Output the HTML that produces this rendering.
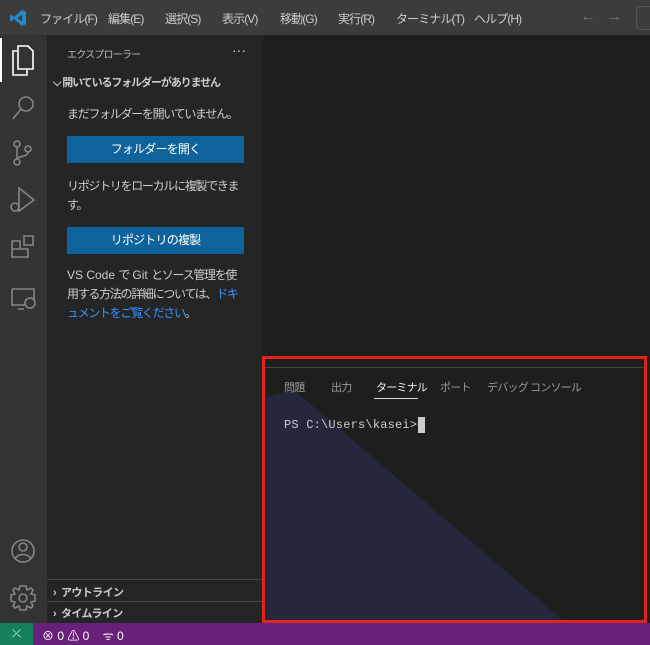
<!DOCTYPE html>
<html><head><meta charset="utf-8"><style>
*{margin:0;padding:0;box-sizing:border-box}
body{width:650px;height:645px;overflow:hidden;background:#1e1e1e;font-family:"Liberation Sans","Noto Sans CJK JP",sans-serif;color:#ccc;position:relative}
.abs{position:absolute;white-space:nowrap}
#title{left:0;top:0;width:650px;height:35px;background:#3c3c3c}
.menu{top:10px;font-size:12px;color:#ccc;letter-spacing:-0.9px}
#act{left:0;top:35px;width:47px;height:588px;background:#333}
#side{left:47px;top:35px;width:216px;height:588px;background:#252526}
.btn{left:67px;width:177px;height:27px;background:#0e639c;color:#fff;font-size:12px;text-align:center;line-height:27px;letter-spacing:-0.8px}
.t{font-size:12px;color:#ccc;line-height:19px;letter-spacing:-1.3px}
.tab{top:379px;font-size:11px;color:#999;letter-spacing:-0.8px}
#status{left:0;top:623px;width:650px;height:22px;background:#68217a;color:#fff;font-size:12px}
</style></head><body>
<div id="title" class="abs"></div>
<svg class="abs" style="left:9px;top:9px" width="18" height="18" viewBox="0 0 18 18"><path d="M13 1 L17 3 V15 L13 17 L5 10 L2 12.5 L1 11.5 V6.5 L2 5.5 L5 8 Z M13 5.5 L8.5 9 L13 12.5 Z" fill="#2489ca"/></svg>
<div class="abs menu" style="left:40px">ファイル(F)</div>
<div class="abs menu" style="left:108px">編集(E)</div>
<div class="abs menu" style="left:165px">選択(S)</div>
<div class="abs menu" style="left:222px">表示(V)</div>
<div class="abs menu" style="left:280px">移動(G)</div>
<div class="abs menu" style="left:338px">実行(R)</div>
<div class="abs menu" style="left:396px">ターミナル(T)</div>
<div class="abs menu" style="left:474px">ヘルプ(H)</div>
<div class="abs" style="left:580px;top:8px;font-size:16px;color:#777">←</div>
<div class="abs" style="left:606px;top:8px;font-size:16px;color:#777">→</div>
<div class="abs" style="left:636px;top:6px;width:20px;height:24px;border:1px solid #555;border-radius:5px"></div>

<div id="act" class="abs"></div>
<div class="abs" style="left:0;top:38px;width:2px;height:44px;background:#fff"></div>
<svg class="abs" style="left:0;top:35px" width="47" height="290" fill="none" stroke="#858585" stroke-width="1.6">
<g stroke="#fff"><path d="M17 16 H13 V40 H27 V34"/><path d="M18 11 H28 L33 16 V34 H18 Z"/></g>
<circle cx="26" cy="69" r="7"/><path d="M21 74 L13 84"/>
<circle cx="17" cy="109" r="3"/><circle cx="17" cy="127" r="3"/><circle cx="28" cy="114" r="3"/><path d="M17 112 V124 M28 117 C28 122 18 121 17 124"/>
<path d="M19 153 V176 L34 165 Z"/><circle cx="15" cy="172" r="4"/>
<path d="M12 206 H20 V214 H12 Z M12 214 V222 H20 M20 214 H28 V222 H20 M24 201 H33 V210 H24 Z"/>
<path d="M12 254 H34 V266 M12 254 V270 H26 M18 274 H24"/><circle cx="30" cy="268" r="5"/>
</svg>
<svg class="abs" style="left:0;top:535px" width="47" height="80" fill="none" stroke="#858585" stroke-width="1.6">
<circle cx="23" cy="16" r="11"/><circle cx="23" cy="12" r="4"/><path d="M15 24 C18 18 28 18 31 24"/>
<circle cx="23" cy="63" r="4"/><path d="M23 51 L26 51 L27 55 L31 53 L33 55 L31 59 L35 60 V66 L31 67 L33 71 L31 73 L27 71 L26 75 H20 L19 71 L15 73 L13 71 L15 67 L11 66 V60 L15 59 L13 55 L15 53 L19 55 L20 51 Z"/>
</svg>

<div id="side" class="abs"></div>
<div class="abs" style="left:67px;top:46px;font-size:10px;color:#bbb;letter-spacing:-0.8px">エクスプローラー</div>
<div class="abs" style="left:232px;top:42px;font-size:14px;color:#ccc">···</div>
<div class="abs" style="left:53px;top:74px;font-size:11px;color:#ccc;font-weight:bold;letter-spacing:-1.1px">⌵ 開いているフォルダーがありません</div>
<div class="abs t" style="left:67px;top:105px">まだフォルダーを開いていません。</div>
<div class="abs btn" style="top:136px">フォルダーを開く</div>
<div class="abs t" style="left:67px;top:177px">リポジトリをローカルに複製できま<br>す。</div>
<div class="abs btn" style="top:227px">リポジトリの複製</div>
<div class="abs t" style="left:67px;top:266px"><span style="letter-spacing:0">VS Code </span>で<span style="letter-spacing:0"> Git </span>とソース管理を使<br>用する方法の詳細については、<span style="color:#3794ff">ドキ<br>ュメントをご覧ください</span>。</div>
<div class="abs" style="left:47px;top:579px;width:216px;height:1px;background:#444"></div>
<div class="abs" style="left:47px;top:601px;width:216px;height:1px;background:#444"></div>
<div class="abs" style="left:53px;top:584px;font-size:11px;font-weight:bold;letter-spacing:-0.6px">›&nbsp; アウトライン</div>
<div class="abs" style="left:53px;top:605px;font-size:11px;font-weight:bold;letter-spacing:-0.6px">›&nbsp; タイムライン</div>

<svg class="abs" style="left:264px;top:358px" width="380" height="263"><polygon points="0,40 30,32 300,263 0,263" fill="#25273d"/></svg>
<div class="abs" style="left:262px;top:356px;width:385px;height:267px;border:3px solid #e0251a"></div>
<div class="abs" style="left:265px;top:367px;width:380px;height:1px;background:#444"></div>
<div class="abs tab" style="left:284px">問題</div>
<div class="abs tab" style="left:331px">出力</div>
<div class="abs tab" style="left:376px;color:#eee">ターミナル</div>
<div class="abs" style="left:374px;top:398px;width:44px;height:1px;background:#ddd"></div>
<div class="abs tab" style="left:440px">ポート</div>
<div class="abs tab" style="left:487px">デバッグ コンソール</div>
<div class="abs" style="left:284px;top:418px;font-family:'Liberation Mono',monospace;font-size:12px;color:#ccc;letter-spacing:0.2px">PS C:\Users\kasei&gt;</div>
<div class="abs" style="left:418px;top:417px;width:7px;height:16px;background:#ccc"></div>

<div id="status" class="abs"></div>
<div class="abs" style="left:0;top:623px;width:33px;height:22px;background:#16825d;color:#fff;font-size:11px;text-align:center;line-height:22px">⤫</div>
<div class="abs" style="left:42px;top:627px;font-size:12px;color:#fff">⊗ 0 ⚠ 0&nbsp;&nbsp;&nbsp; ᯤ 0</div>
</body></html>
